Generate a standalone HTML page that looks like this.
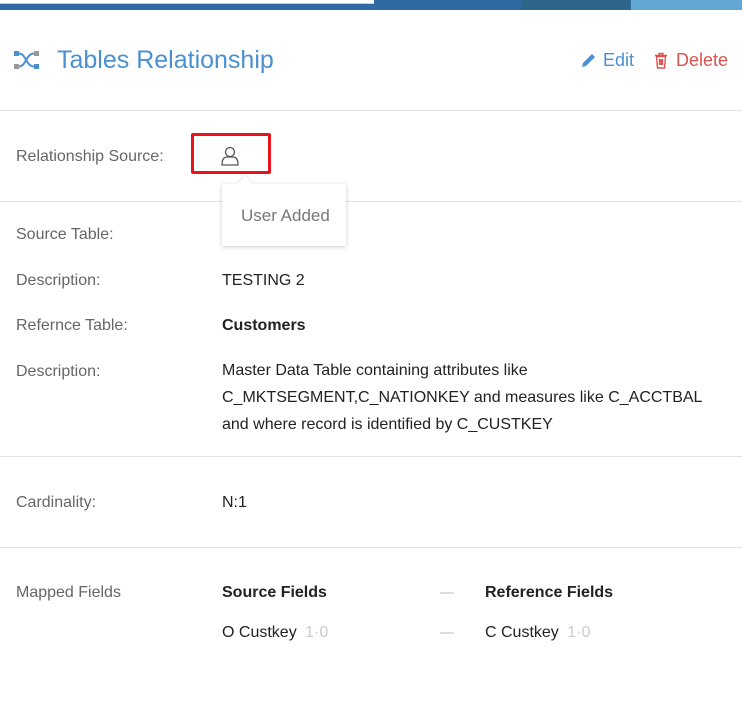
<!DOCTYPE html>
<html><head><style>
body{margin:0;width:742px;height:706px;background:#fff;font-family:"Liberation Sans",sans-serif;position:relative;overflow:hidden}
.a{position:absolute}
.lbl{position:absolute;left:16px;color:#666;font-size:16px}
.val{position:absolute;left:222px;color:#222;font-size:16px}
.hr{position:absolute;left:0;width:742px;height:1px;background:#e3e3e3}
</style></head><body>
<div class="a" style="left:0;top:0;width:742px;height:10px;background:#2f6ba2"></div>
<div class="a" style="left:0;top:0;width:374px;height:3px;background:#fff;border-bottom:1px solid #ccc"></div>
<div class="a" style="left:521px;top:0;width:109px;height:10px;background:#2e6589"></div>
<div class="a" style="left:631px;top:0;width:111px;height:10px;background:#63a8d3"></div>
<svg class="a" style="left:14px;top:49px" width="26" height="24" viewBox="0 0 26 24">
<rect x="0" y="2" width="5" height="5" fill="#4a90d2"/><rect x="0" y="15" width="5" height="5" fill="#999"/>
<rect x="20" y="2" width="5" height="5" fill="#999"/><rect x="20" y="15" width="5" height="5" fill="#4a90d2"/>
<path d="M5 4.5 C12 4.5 12 17.5 20 17.5 M5 17.5 C12 17.5 12 4.5 20 4.5" stroke="#4a90d2" stroke-width="2" fill="none"/></svg>
<div class="a" style="left:57px;top:46px;font-size:25px;color:#4a90d2">Tables Relationship</div>
<svg class="a" style="left:580px;top:52px" width="17" height="17" viewBox="0 0 17 17"><path d="M2 15 L3 11 L12 2 L15 5 L6 14 Z" fill="#4a90d2"/></svg>
<div class="a" style="left:603px;top:50px;font-size:18px;color:#4a90d2">Edit</div>
<svg class="a" style="left:654px;top:52px" width="14" height="17" viewBox="0 0 14 17"><path d="M1 3.5H13M5 3V1.5H9V3M2.5 4.5L3.5 16H10.5L11.5 4.5Z M5.5 7V13M7 7V13M8.5 7V13" stroke="#d9534f" stroke-width="1.4" fill="none"/></svg>
<div class="a" style="left:676px;top:50px;font-size:18px;color:#d9534f">Delete</div>
<div class="hr" style="top:110px"></div>
<div class="lbl" style="top:148px">Relationship Source:</div>
<div class="a" style="left:191px;top:133px;width:74px;height:35px;border:3px solid #e8141c;border-radius:2px"></div>
<svg class="a" style="left:220px;top:145px" width="20" height="22" viewBox="0 0 20 22"><circle cx="10" cy="7" r="4.5" stroke="#555" stroke-width="1.3" fill="none"/><path d="M2 20 C2 13 5 12 7 12 L13 12 C15 12 18 13 18 20 Z" stroke="#555" stroke-width="1.3" fill="none"/></svg>
<div class="hr" style="top:201px"></div>
<div class="lbl" style="top:226px">Source Table:</div>
<div class="a" style="left:222px;top:184px;width:124px;height:62px;background:#fff;box-shadow:0 1px 5px rgba(0,0,0,.2);border-radius:2px"></div>
<div class="a" style="left:240px;top:178px;width:10px;height:10px;background:#fff;transform:rotate(45deg);box-shadow:-1px -1px 2px rgba(0,0,0,.1)"></div>
<div class="a" style="left:241px;top:206px;font-size:17px;color:#777">User Added</div>
<div class="lbl" style="top:272px">Description:</div>
<div class="val" style="top:272px">TESTING 2</div>
<div class="lbl" style="top:317px">Refernce Table:</div>
<div class="val" style="top:317px;font-weight:bold">Customers</div>
<div class="lbl" style="top:363px">Description:</div>
<div class="val" style="top:357px;width:510px;line-height:27px">Master Data Table containing attributes like C_MKTSEGMENT,C_NATIONKEY and measures like C_ACCTBAL and where record is identified by C_CUSTKEY</div>
<div class="hr" style="top:456px"></div>
<div class="lbl" style="top:494px">Cardinality:</div>
<div class="val" style="top:494px">N:1</div>
<div class="hr" style="top:547px"></div>
<div class="lbl" style="top:584px">Mapped Fields</div>
<div class="val" style="top:584px;font-weight:bold">Source Fields</div>
<div class="a" style="left:440px;top:592px;width:14px;height:2px;background:#ddd"></div>
<div class="a" style="left:485px;top:584px;font-size:16px;font-weight:bold;color:#222">Reference Fields</div>
<div class="val" style="top:624px">O Custkey <span style="color:#ccc;margin-left:4px">1·0</span></div>
<div class="a" style="left:440px;top:632px;width:14px;height:2px;background:#ddd"></div>
<div class="a" style="left:485px;top:624px;font-size:16px;color:#222">C Custkey <span style="color:#ccc;margin-left:4px">1·0</span></div>
</body></html>
